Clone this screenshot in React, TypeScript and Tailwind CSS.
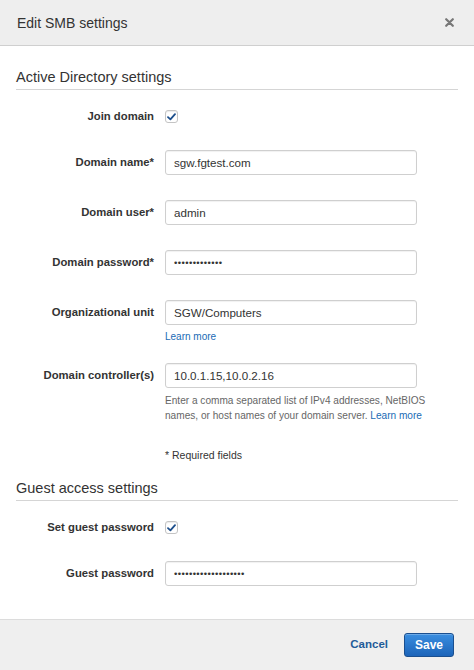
import React from 'react';

const font = { fontFamily: '"Liberation Sans", Arial, Helvetica, sans-serif' };

const Checkbox: React.FC = () => (
  <span className="flex h-[13px] w-[13px] items-center justify-center rounded-[3px] border border-[#c4c4c4] bg-white shadow-[inset_0_1px_1px_rgba(0,0,0,0.08)]">
    <svg width="9" height="8" viewBox="0 0 9 8" fill="none">
      <path d="M1 4.2 L3.4 6.4 L8 1.2" stroke="#1d4f8c" strokeWidth="1.8" strokeLinecap="round" strokeLinejoin="round" />
    </svg>
  </span>
);

interface RowProps {
  label: string;
  className?: string;
  children: React.ReactNode;
}

const Row: React.FC<RowProps> = ({ label, className = '', children }) => (
  <div className={`flex items-center ${className}`}>
    <label className="w-[138px] shrink-0 text-right text-[11.3px] font-bold text-[#333]">{label}</label>
    <div className="ml-[11px] flex w-[252px] items-center">{children}</div>
  </div>
);

const TextBox: React.FC<{ value: string; dots?: boolean }> = ({ value, dots }) => (
  <input
    readOnly
    value={value}
    className={`h-[25px] w-full rounded-[3px] border border-[#cfcfcf] bg-white px-[8px] text-[#333] shadow-[inset_0_1px_1px_rgba(0,0,0,0.06)] outline-none ${
      dots ? 'text-[9.5px] tracking-[0.4px]' : 'text-[11.6px]'
    }`}
  />
);

const SectionHeading: React.FC<{ title: string; className?: string }> = ({ title, className = '' }) => (
  <h2 className={`border-b border-[#d5d5d5] pb-[2px] text-[14.5px] leading-[20px] font-normal text-[#333] ${className}`}>
    {title}
  </h2>
);

export default function App() {
  return (
    <div className="flex h-[670px] w-[474px] flex-col bg-white" style={font}>
      {/* Header */}
      <div className="flex h-[46px] shrink-0 items-center justify-between border-b border-[#cfcfcf] bg-[#eeeeee] pl-[17px] pr-[20px]">
        <h1 className="pt-[2px] text-[14px] text-[#333]">Edit SMB settings</h1>
        <svg width="9" height="9" viewBox="0 0 9 9">
          <path d="M1.2 1.2 L7.8 7.8 M7.8 1.2 L1.2 7.8" stroke="#777" strokeWidth="2.2" strokeLinecap="round" />
        </svg>
      </div>

      {/* Body */}
      <div className="px-4">
        <SectionHeading title="Active Directory settings" className="mt-[21px]" />

        <Row label="Join domain" className="mt-[14px] h-[25px]">
          <Checkbox />
        </Row>
        <Row label="Domain name*" className="mt-[21px]">
          <TextBox value="sgw.fgtest.com" />
        </Row>
        <Row label="Domain user*" className="mt-[25px]">
          <TextBox value="admin" />
        </Row>
        <Row label="Domain password*" className="mt-[25px]">
          <TextBox value={'•'.repeat(13)} dots />
        </Row>
        <Row label="Organizational unit" className="mt-[25px]">
          <TextBox value="SGW/Computers" />
        </Row>
        <div className="ml-[149px] mt-[5px] text-[10px] leading-[14px]">
          <a className="text-[#1a6bb5]">Learn more</a>
        </div>
        <Row label="Domain controller(s)" className="mt-[19px]">
          <TextBox value="10.0.1.15,10.0.2.16" />
        </Row>
        <p className="ml-[149px] mt-[5px] text-[10.1px] leading-[15px] text-[#666]">
          Enter a comma separated list of IPv4 addresses, NetBIOS
          <br />
          names, or host names of your domain server.{' '}
          <a className="text-[#1a6bb5]">Learn more</a>
        </p>
        <p className="ml-[149px] mt-[24px] text-[10.5px] leading-[16px] text-[#333]">* Required fields</p>

        <SectionHeading title="Guest access settings" className="mt-[15px]" />

        <Row label="Set guest password" className="mt-[14px] h-[25px]">
          <Checkbox />
        </Row>
        <Row label="Guest password" className="mt-[21px]">
          <TextBox value={'•'.repeat(19)} dots />
        </Row>
      </div>

      {/* Footer */}
      <div className="mt-auto flex h-[51px] items-center justify-end gap-[16px] border-t border-[#dcdcdc] bg-[#efefef] pr-[20px]">
        <button className="text-[11.5px] font-bold text-[#1f5b99]">Cancel</button>
        <button className="h-[24px] w-[50px] rounded-[3px] border border-[#1a4f8f] bg-gradient-to-b from-[#3a8ee0] to-[#1c64b9] text-[12px] font-bold text-white shadow-[inset_0_1px_0_rgba(255,255,255,0.25)]">
          Save
        </button>
      </div>
    </div>
  );
}
